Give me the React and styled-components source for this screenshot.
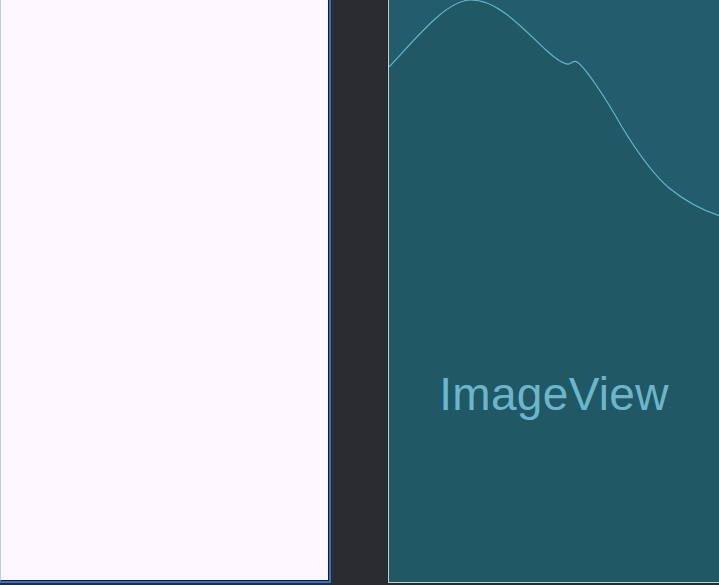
import React from "react"
import styled, { createGlobalStyle } from "styled-components"

const GlobalStyle = createGlobalStyle`
  html, body {
    margin: 0;
    padding: 0;
    background: #2b2c30;
    font-family: "Liberation Sans", Arial, sans-serif;
  }
`

const Screen = styled.div`
  display: flex;
  align-items: flex-start;
  width: 719px;
  height: 585px;
  overflow: hidden;
  background: #2b2c30;
`

const Blueprint = styled.div`
  box-sizing: border-box;
  width: 329px;
  height: 581px;
  background: #fdf8ff;
  border-left: 1px solid #b3cff3;
  border-right: 1px solid #1b1c1f;
  border-bottom: 1px solid #1b1c1f;
  box-shadow: 2px 0 0 #2a74d3, 0 2px 0 #2a74d3, 2px 2px 0 #2a74d3;
`

const Preview = styled.div`
  position: relative;
  box-sizing: border-box;
  width: 331px;
  height: 583px;
  margin-left: auto;
  display: flex;
  flex-direction: column;
  align-items: center;
  padding-top: 371px;
  background: #235d6d;
  border-left: 1px solid #c9cdd1;
  border-bottom: 1px solid #c9cdd1;
  box-shadow: -1px 0 0 #232427;
  overflow: hidden;
`

const Wave = styled.svg`
  position: absolute;
  left: 0;
  top: 0;
`

const Label = styled.div`
  position: relative;
  font-size: 46px;
  line-height: 46px;
  color: #6cb6ca;
  letter-spacing: 0.3px;
`

const curve =
  "M0,67 C30,35 58,0 82,0 C110,0 135,30 157,50 C168,60 175,65 180,64 C184,62 186,60 188,62 C195,66 215,95 233,127 C250,155 265,175 280,188 C295,200 315,211 331,216"

const App = () => (
  <>
    <GlobalStyle />
    <Screen>
      <Blueprint />
      <Preview>
        <Wave width="331" height="583" viewBox="0 0 331 583">
          <path d={`${curve} L331,583 L0,583 Z`} fill="#205866" />
          <path d={curve} fill="none" stroke="#6ab4c8" strokeWidth="1.2" />
        </Wave>
        <Label>ImageView</Label>
      </Preview>
    </Screen>
  </>
)

export default App
